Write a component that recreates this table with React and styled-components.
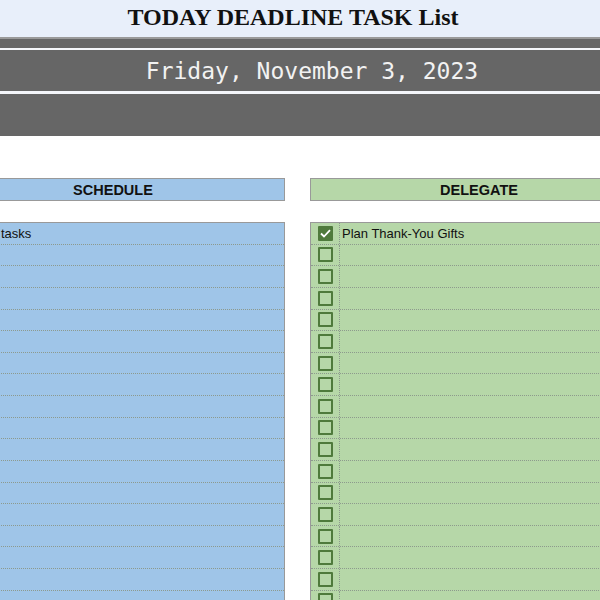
import React from "react";
import styled, { createGlobalStyle } from "styled-components";

const GlobalStyle = createGlobalStyle`
  html, body {
    margin: 0;
    padding: 0;
    background: #fff;
    overflow: hidden;
  }
  body {
    font-family: "Liberation Sans", Arial, sans-serif;
  }
`;

const ROWS = 18;

const Page = styled.div`
  width: 600px;
  height: 600px;
  overflow: hidden;
`;

const TitleBar = styled.div`
  height: 39px;
  box-sizing: border-box;
  background: #e8effa;
  border-bottom: 2px solid #9a9a9a;
  display: flex;
  align-items: center;
  justify-content: center;
  padding: 0 14px 2px 0;
`;

const Title = styled.h1`
  margin: 0;
  font-family: "Liberation Serif", "Times New Roman", serif;
  font-weight: 700;
  font-size: 24px;
  color: #111;
`;

const DateBand = styled.div`
  background: #666666;
  padding: 9px 0 42px;
`;

const DateRow = styled.div`
  height: 41px;
  border-top: 2px solid #f4f6fa;
  border-bottom: 3px solid #f4f6fa;
  display: flex;
  align-items: center;
  justify-content: center;
  font-family: "DejaVu Sans Mono", "Liberation Mono", monospace;
  font-size: 23px;
  color: #f2f2f2;
  padding-left: 24px;
`;

const Board = styled.div`
  margin: 42px 0 0 -59px;
  display: grid;
  grid-template-columns: 344px 338px;
  column-gap: 25px;
`;

const Column = styled.div`
  display: flex;
  flex-direction: column;
  gap: 21px;
`;

const Header = styled.div`
  height: 23px;
  box-sizing: border-box;
  border: 1px solid #999;
  background: ${(p) => p.$bg};
  display: flex;
  align-items: center;
  justify-content: center;
  font-weight: 700;
  font-size: 14.5px;
  color: #111;
`;

const List = styled.div`
  border-top: 1px solid #999;
  border-left: 1px solid #999;
  border-right: 1px solid #999;
  background: ${(p) => p.$bg};
`;

const Row = styled.div`
  height: 21.625px;
  box-sizing: border-box;
  border-bottom: 1px dotted #8d9a8d;
  display: grid;
  grid-template-columns: ${(p) => p.$check}px 1fr;
`;

const CheckCell = styled.div`
  border-right: ${(p) => (p.$line ? "1px dotted #8d9a8d" : "none")};
  display: flex;
  align-items: center;
  justify-content: center;
`;

const Box = styled.span`
  width: 15px;
  height: 15px;
  box-sizing: border-box;
  border: 2px solid #4f7a3c;
  border-radius: 1px;
  background: ${(p) => (p.$checked ? "#4f7a3c" : "transparent")};
  display: flex;
  align-items: center;
  justify-content: center;
`;

const TaskText = styled.div`
  font-size: 13px;
  color: #111;
  display: flex;
  align-items: center;
  padding-left: ${(p) => p.$pad}px;
  white-space: nowrap;
  overflow: hidden;
`;

const Check = () => (
  <svg width="11" height="9" viewBox="0 0 11 9">
    <path d="M1 4.5 L4 7.5 L10 1.2" fill="none" stroke="#fff" strokeWidth="1.8" />
  </svg>
);

const scheduleTasks = ["tasks"];
const delegateTasks = ["Plan Thank-You Gifts"];

export default function App() {
  const rows = Array.from({ length: ROWS });
  return (
    <Page>
      <GlobalStyle />
      <TitleBar>
        <Title>TODAY DEADLINE TASK List</Title>
      </TitleBar>
      <DateBand>
        <DateRow>Friday, November 3, 2023</DateRow>
      </DateBand>
      <Board>
        <Column>
          <Header $bg="#9fc5e8">SCHEDULE</Header>
          <List $bg="#9fc5e8">
            {rows.map((_, i) => (
              <Row key={i} $check={58}>
                <CheckCell />
                <TaskText $pad={1}>{scheduleTasks[i] || ""}</TaskText>
              </Row>
            ))}
          </List>
        </Column>
        <Column>
          <Header $bg="#b6d7a8">DELEGATE</Header>
          <List $bg="#b6d7a8">
            {rows.map((_, i) => (
              <Row key={i} $check={29}>
                <CheckCell $line>
                  <Box $checked={i === 0}>{i === 0 && <Check />}</Box>
                </CheckCell>
                <TaskText $pad={2}>{delegateTasks[i] || ""}</TaskText>
              </Row>
            ))}
          </List>
        </Column>
      </Board>
    </Page>
  );
}
